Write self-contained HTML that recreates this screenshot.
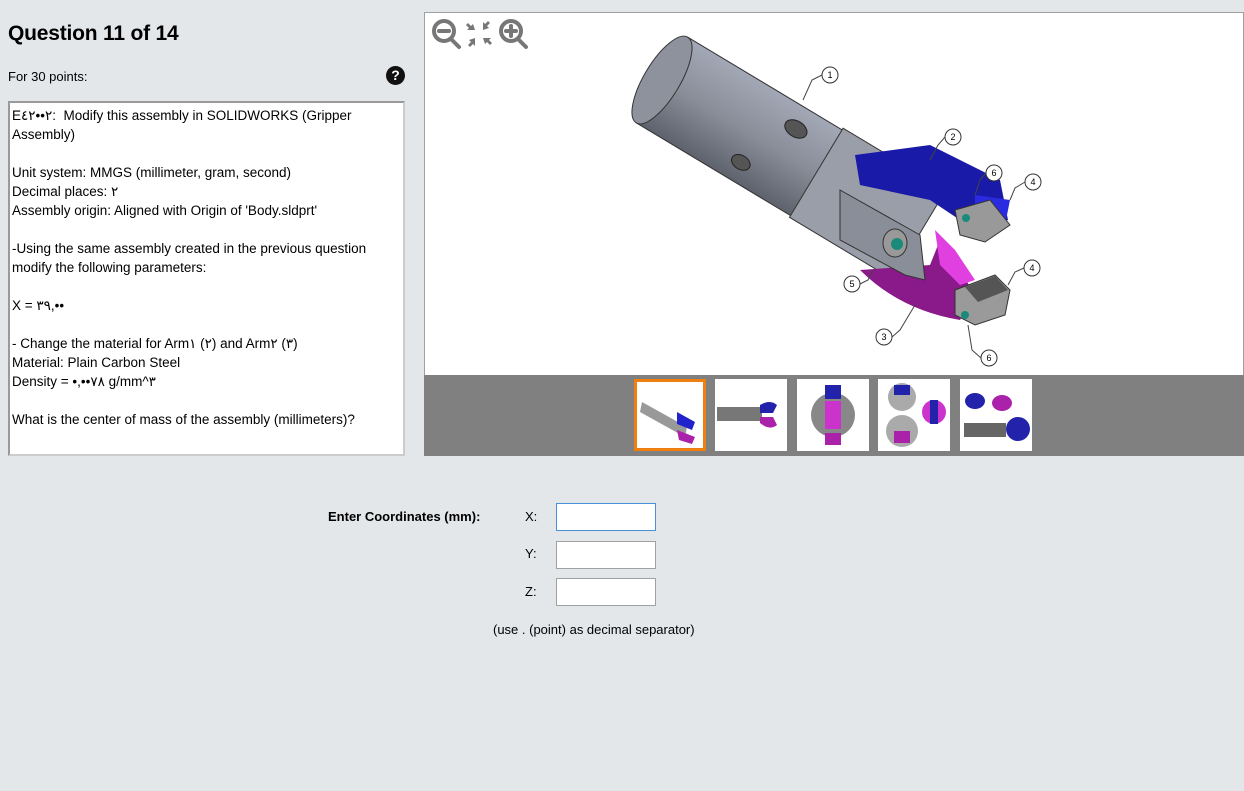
<!DOCTYPE html>
<html><head><meta charset="utf-8"><style>
body{margin:0;width:1244px;height:791px;background:#e4e7ea;font-family:"Liberation Sans","DejaVu Sans",sans-serif;position:relative;overflow:hidden;color:#000}
h1{position:absolute;left:8px;top:22px;margin:0;font-size:21px;font-weight:bold;letter-spacing:-0.2px}
.pts{position:absolute;left:8px;top:69px;font-size:13px}
.help{position:absolute;left:386px;top:66px;width:19px;height:19px;border-radius:50%;background:#111;color:#fff;font-weight:bold;font-size:14px;text-align:center;line-height:19px}
.txt{position:absolute;left:8px;top:101px;background:#fff;border:2px solid #9a9a9a;border-right-color:#ccc;border-bottom-color:#ccc;font-size:13.5px;line-height:19px;padding:3px 2px;box-sizing:border-box;width:397px;height:355px}
.img{position:absolute;left:424px;top:12px;width:820px;height:364px;background:#fff;border:1px solid #a0a0a0;box-sizing:border-box}
.strip{position:absolute;left:424px;top:375px;width:820px;height:81px;background:#808080}
.th{position:absolute;top:379px;width:72px;height:72px;background:#fff;box-sizing:border-box;overflow:hidden}
.lab{position:absolute;font-size:13px}
.inp{position:absolute;left:556px;width:100px;height:28px;background:#fff;border:1px solid #a0a0a0;box-sizing:border-box}
</style></head><body>
<h1>Question 11 of 14</h1>
<div class="pts">For 30 points:</div>
<div class="help">?</div>
<div class="txt"><bdo dir="ltr">E٤٢••٢:&nbsp; Modify this assembly in SOLIDWORKS (Gripper Assembly)<br><br>Unit system: MMGS (millimeter, gram, second)<br>Decimal places: ٢<br>Assembly origin: Aligned with Origin of 'Body.sldprt'<br><br>-Using the same assembly created in the previous question<br>modify the following parameters:<br><br>X = ٣٩,••<br><br>- Change the material for Arm١ (٢) and Arm٢ (٣)<br>Material: Plain Carbon Steel<br>Density = •,••٧٨ g/mm^٣<br><br>What is the center of mass of the assembly (millimeters)?</bdo></div>
<div class="img">
<svg width="818" height="362" viewBox="425 13 818 362" style="position:absolute;left:0;top:0">
<g fill="none" stroke="#777" stroke-width="4" stroke-linecap="round">
<circle cx="444" cy="31" r="10"/><line x1="451" y1="39" x2="459" y2="47"/><line x1="439" y1="31" x2="449" y2="31"/>
<circle cx="511" cy="31" r="10"/><line x1="518" y1="39" x2="526" y2="47"/><line x1="506" y1="31" x2="516" y2="31"/><line x1="511" y1="26" x2="511" y2="36"/>
</g>
<g fill="#777"><path d="M475 30l-8 0 2-2-3-3 2-2 3 3 2-2z M483 30l0-8 2 2 3-3 2 2-3 3 2 2z M475 38l0 8-2-2-3 3-2-2 3-3-2-2z M483 38l8 0-2 2 3 3-2 2-3-3-2 2z"/></g>
<defs><linearGradient id="cg" x1="0" y1="0" x2="0" y2="1"><stop offset="0" stop-color="#a3a8b6"/><stop offset="0.5" stop-color="#8a8e99"/><stop offset="1" stop-color="#5e626c"/></linearGradient></defs>
<g transform="translate(662 80) rotate(31)">
<rect x="0" y="-50" width="290" height="100" fill="url(#cg)" stroke="#333"/>
<ellipse cx="0" cy="0" rx="18" ry="50" fill="#8e929c" stroke="#333"/>
<ellipse cx="140" cy="-27" rx="12" ry="8" fill="#555" stroke="#222"/>
<ellipse cx="110" cy="30" rx="10" ry="7" fill="#555" stroke="#222"/>
<rect x="180" y="-52" width="120" height="104" fill="#9a9ea8" stroke="#333"/>
</g>
<path d="M855 155 L930 145 L1000 180 L1008 220 L975 230 L930 200 L860 185Z" fill="#1a1aa8"/>
<path d="M975 195 L1010 200 L1005 225 L975 230Z" fill="#2a2ae0"/>
<path d="M860 270 Q900 310 960 320 L975 295 L960 270 L940 240 L930 265Z" fill="#8a1a8a"/>
<path d="M935 230 L955 250 L975 280 L960 285 L940 265Z" fill="#e040e0"/>
<path d="M840 190 L920 235 L925 280 L905 275 L840 240Z" fill="#8a8e98" stroke="#333"/>
<ellipse cx="895" cy="243" rx="12" ry="14" fill="#999" stroke="#333"/>
<circle cx="897" cy="244" r="6" fill="#1a8a7a"/>
<path d="M955 210 L990 200 L1010 225 L985 242 L960 235Z" fill="#999" stroke="#333"/>
<circle cx="966" cy="218" r="4" fill="#1a8a7a"/>
<path d="M955 290 L995 275 L1010 290 L1005 315 L975 325 L955 315Z" fill="#9a9a9a" stroke="#333"/>
<path d="M965 287 L995 276 L1008 290 L978 302Z" fill="#555"/>
<circle cx="965" cy="315" r="4" fill="#1a8a7a"/>
<g fill="#fff" stroke="#333" stroke-width="1">
<circle cx="830" cy="75" r="8"/><circle cx="953" cy="137" r="8"/><circle cx="994" cy="173" r="8"/><circle cx="1033" cy="182" r="8"/><circle cx="1032" cy="268" r="8"/><circle cx="852" cy="284" r="8"/><circle cx="884" cy="337" r="8"/><circle cx="989" cy="358" r="8"/>
</g>
<g fill="#000" font-size="9" font-family="Liberation Sans" text-anchor="middle">
<text x="830" y="78">1</text><text x="953" y="140">2</text><text x="994" y="176">6</text><text x="1033" y="185">4</text><text x="1032" y="271">4</text><text x="852" y="287">5</text><text x="884" y="340">3</text><text x="989" y="361">6</text>
</g>
<path d="M822 75 L812 80 L803 100 M945 137 L938 145 L930 160 M986 173 L980 180 L975 195 M1025 182 L1015 188 L1010 200 M1024 268 L1015 272 L1008 285 M860 284 L868 280 L873 270 M892 337 L900 330 L915 305 M981 358 L972 350 L968 325" stroke="#444" fill="none"/>
</svg></div>
<div class="strip"></div>
<div class="th" style="left:634px;border:3px solid #f07f10"><svg width="66" height="66"><path d="M5 20 L50 45 L48 55 L3 30Z" fill="#999"/><path d="M40 30 L58 40 L55 48 L40 42Z" fill="#22c"/><path d="M40 48 L58 55 L55 62 L42 58Z" fill="#a2a"/></svg></div>
<div class="th" style="left:715px"><svg width="72" height="72"><rect x="2" y="28" width="45" height="14" fill="#777"/><path d="M45 26 Q55 20 62 26 L58 34 L45 34Z" fill="#22a"/><path d="M45 38 L58 38 L62 46 Q55 52 45 44Z" fill="#a2a"/></svg></div>
<div class="th" style="left:797px"><svg width="72" height="72"><circle cx="36" cy="36" r="22" fill="#888"/><rect x="28" y="6" width="16" height="14" fill="#22a"/><rect x="28" y="22" width="16" height="28" fill="#c3c"/><rect x="28" y="54" width="16" height="12" fill="#a2a"/></svg></div>
<div class="th" style="left:878px"><svg width="72" height="72"><circle cx="24" cy="18" r="14" fill="#aaa"/><rect x="16" y="6" width="16" height="10" fill="#22a"/><circle cx="56" cy="33" r="12" fill="#c3c"/><rect x="52" y="21" width="8" height="24" fill="#22a"/><circle cx="24" cy="52" r="16" fill="#aaa"/><rect x="16" y="52" width="16" height="12" fill="#a2a"/></svg></div>
<div class="th" style="left:960px"><svg width="72" height="72"><ellipse cx="15" cy="22" rx="10" ry="8" fill="#22a"/><ellipse cx="42" cy="24" rx="10" ry="8" fill="#a2a"/><rect x="4" y="44" width="42" height="14" fill="#666"/><circle cx="58" cy="50" r="12" fill="#22a"/></svg></div>
<div class="lab" style="left:328px;top:509px;font-weight:bold">Enter Coordinates (mm):</div>
<div class="lab" style="left:525px;top:509px">X:</div>
<div class="lab" style="left:525px;top:546px">Y:</div>
<div class="lab" style="left:525px;top:584px">Z:</div>
<div class="inp" style="top:503px;border-color:#4a90d9"></div>
<div class="inp" style="top:541px"></div>
<div class="inp" style="top:578px"></div>
<div class="lab" style="left:493px;top:622px">(use . (point) as decimal separator)</div>
</body></html>
